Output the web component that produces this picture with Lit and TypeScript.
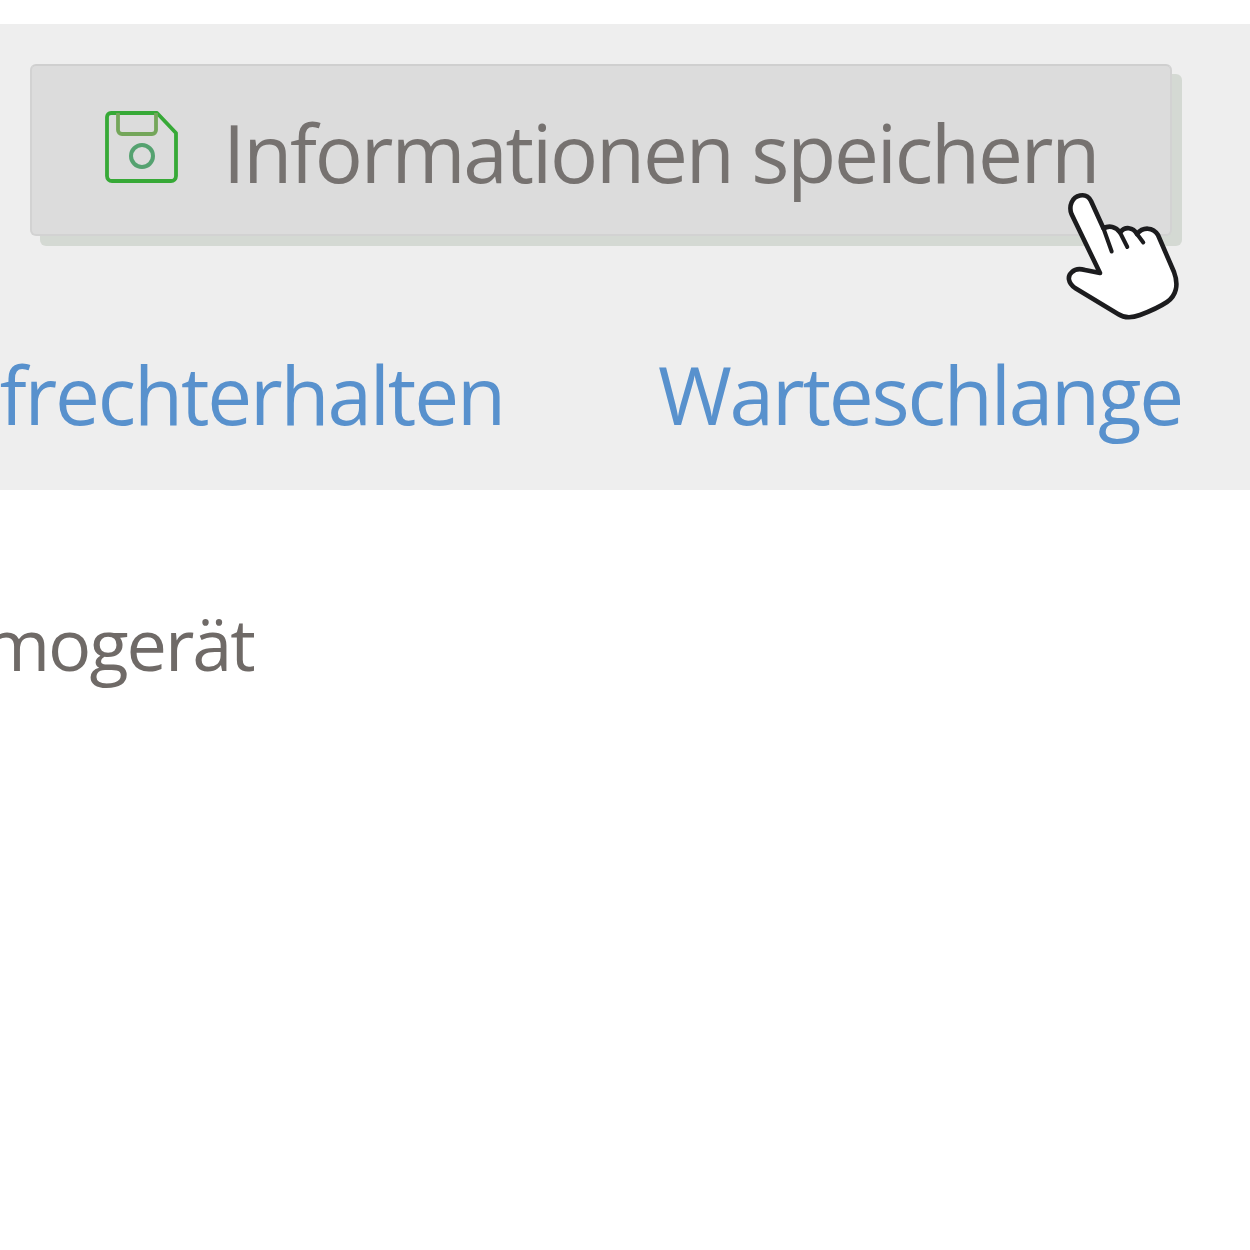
import { LitElement, css, html } from "lit";
import { customElement } from "lit/decorators.js";

@customElement("app-root")
export class AppRoot extends LitElement {
  static styles = css`
    :host {
      display: block;
      position: relative;
      width: 1250px;
      height: 1250px;
      overflow: hidden;
      background: #fff;
      font-family: "Open Sans", "Noto Sans", sans-serif;
    }

    .page {
      display: flex;
      flex-direction: column;
      padding-top: 24px;
    }

    .toolbar {
      display: flex;
      flex-direction: column;
      height: 466px;
      box-sizing: border-box;
      padding: 40px 0 0 30px;
      background: #eeeeee;
      overflow: hidden;
    }

    .save {
      display: flex;
      align-items: center;
      gap: 44px;
      box-sizing: border-box;
      width: 1142px;
      height: 172px;
      padding: 0 0 0 75px;
      border: 2px solid #d2d2d2;
      border-top-color: #cfcfcf;
      border-radius: 6px;
      background: #dcdcdc;
      box-shadow: 10px 10px 0 #d4d9d3;
      font: inherit;
      filter: blur(0.7px);
    }

    .save svg {
      flex: none;
      width: 74px;
      height: 74px;
      margin: -6px 0 0 -2px;
    }

    .save span {
      margin-top: 4px;
      color: #767270;
      font-size: 80px;
      letter-spacing: -2.15px;
      line-height: 1;
      white-space: nowrap;
    }

    .tabs {
      display: flex;
      justify-content: flex-end;
      gap: 154px;
      margin: 118px 68px 0 -30px;
      color: #5891cd;
      font-size: 80px;
      letter-spacing: -2.15px;
      line-height: 1;
      white-space: nowrap;
      filter: blur(0.7px);
    }

    .device {
      display: flex;
      justify-content: flex-end;
      width: 254px;
      margin-top: 107px;
      overflow: hidden;
      color: #6f6a67;
      font-size: 72px;
      letter-spacing: -2px;
      line-height: 1.3;
      white-space: nowrap;
      filter: blur(0.7px);
    }

    .cursor {
      position: absolute;
      left: 1060px;
      top: 190px;
      width: 125px;
      height: 135px;
    }
  `;

  render() {
    return html`
      <div class="page">
        <section class="toolbar">
          <button class="save" type="button">
            <svg viewBox="0 0 74 74" fill="none" stroke-width="3.8" stroke-linejoin="round">
              <path
                d="M6 3H52L71 23V66a5 5 0 0 1-5 5H7a5 5 0 0 1-5-5V7a4 4 0 0 1 4-4Z"
                stroke="#37a937"
              />
              <path d="M13 3V20a4 4 0 0 0 4 4H47a4 4 0 0 0 4-4V3" stroke="#74a65a" />
              <circle cx="37" cy="46" r="11" stroke="#55a270" stroke-width="4" />
            </svg>
            <span>Informationen speichern</span>
          </button>
          <nav class="tabs">
            <span>aufrechterhalten</span>
            <span>Warteschlange</span>
          </nav>
        </section>
        <div class="device">Demogerät</div>
      </div>
      <svg class="cursor" viewBox="0 0 125 135" aria-hidden="true">
        <path
          d="M40 83 L11.5 24 C8.5 16 12 7 20 5.5 C25 4.5 29 7 31 11 L43.5 38.5 C49 35 56 36.5 60 42.5 C65 36 73 37 77 44 C83 36.5 93 37 98 45 L114 82 C119 95 116 106 107 112 C98 118 88 122 80 125 C72 128 64 128 58 124 L15 98 C8 93 7 86 12 82 C15 79 20 78.5 25 80 Z"
          fill="#fff"
          stroke="#1c1c1e"
          stroke-width="4.6"
          stroke-linejoin="round"
        />
        <path
          d="M43.5 38.5 L51.7 61.5 M60 42.5 L67.3 57 M77 44 L83.3 52.5"
          fill="none"
          stroke="#1c1c1e"
          stroke-width="4"
          stroke-linecap="round"
        />
      </svg>
    `;
  }
}
